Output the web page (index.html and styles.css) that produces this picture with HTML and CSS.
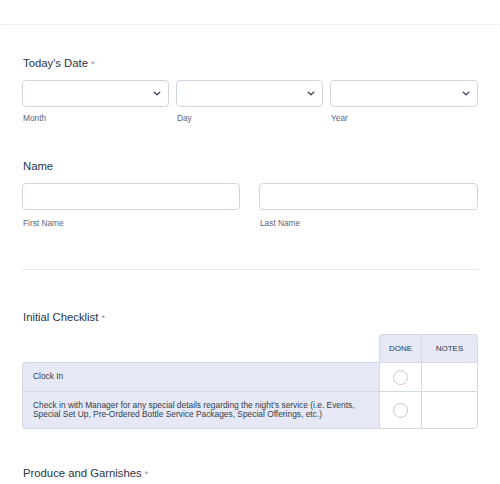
FILE: index.html
```html
<!DOCTYPE html>
<html>
<head>
<meta charset="utf-8">
<link rel="stylesheet" href="styles.css">
</head>
<body>
<div class="header"></div>
<div class="form">
  <div class="field date-field">
    <div class="label">Today's Date <span class="req">*</span></div>
    <div class="row three">
      <div class="col">
        <div class="select"><svg class="chev" width="8" height="5" viewBox="0 0 8 5"><path d="M1.2 1.2l2.8 2.6 2.8-2.6" fill="none" stroke="#3a4254" stroke-width="1.2" stroke-linecap="round" stroke-linejoin="round"/></svg></div>
        <div class="sublabel">Month</div>
      </div>
      <div class="col">
        <div class="select"><svg class="chev" width="8" height="5" viewBox="0 0 8 5"><path d="M1.2 1.2l2.8 2.6 2.8-2.6" fill="none" stroke="#3a4254" stroke-width="1.2" stroke-linecap="round" stroke-linejoin="round"/></svg></div>
        <div class="sublabel">Day</div>
      </div>
      <div class="col">
        <div class="select"><svg class="chev" width="8" height="5" viewBox="0 0 8 5"><path d="M1.2 1.2l2.8 2.6 2.8-2.6" fill="none" stroke="#3a4254" stroke-width="1.2" stroke-linecap="round" stroke-linejoin="round"/></svg></div>
        <div class="sublabel">Year</div>
      </div>
    </div>
  </div>

  <div class="field name-field">
    <div class="label">Name</div>
    <div class="row two">
      <div class="col">
        <div class="input"></div>
        <div class="sublabel">First Name</div>
      </div>
      <div class="col">
        <div class="input"></div>
        <div class="sublabel">Last Name</div>
      </div>
    </div>
  </div>

  <div class="divider"></div>

  <div class="field check-field">
    <div class="label">Initial Checklist <span class="req">*</span></div>
    <div class="matrix">
      <div class="m-empty"></div>
      <div class="m-head">DONE</div>
      <div class="m-head m-last">NOTES</div>

      <div class="m-row m-first">Clock In</div>
      <div class="m-cell"><span class="radio"></span></div>
      <div class="m-cell m-last"></div>

      <div class="m-row m-bottom">Check in with Manager for any special details regarding the night’s service (i.e. Events, Special Set Up, Pre-Ordered Bottle Service Packages, Special Offerings, etc.)</div>
      <div class="m-cell m-bottom"><span class="radio"></span></div>
      <div class="m-cell m-last m-bottom m-br"></div>
    </div>
  </div>

  <div class="field produce-field">
    <div class="label">Produce and Garnishes <span class="req">*</span></div>
  </div>
</div>
</body>
</html>
```

FILE: styles.css
```css
* { box-sizing: border-box; }
html, body { margin: 0; padding: 0; background: #fff; }
body { width: 500px; height: 484px; overflow: hidden; font-family: "Liberation Sans", Arial, sans-serif; color: #2c3345; }

.header { height: 25px; border-bottom: 1px dotted #dfe3ee; }

.form { padding: 0 22px; }

.field { display: flex; flex-direction: column; }
.label { font-size: 11.3px; line-height: 14px; color: #2c3345; padding-left: 1px; }
.req { color: #8a93a8; font-size: 9px; }

.date-field { padding-top: 31px; }
.date-field .label { margin-bottom: 9px; }
.row { display: grid; }
.row.three { grid-template-columns: 147px 147px 148px; column-gap: 7px; }
.row.two { grid-template-columns: 218px 219px; column-gap: 19px; }
.col { display: flex; flex-direction: column; }

.select, .input {
  height: 27px;
  border: 1px solid #cfd5e2;
  border-radius: 4px;
  background: #fff;
}
.select { display: flex; align-items: center; justify-content: flex-end; padding-right: 7px; }
.chev { display: block; }

.sublabel { font-size: 8.3px; line-height: 10px; color: #5b6578; margin-top: 6px; padding-left: 1px; }
.name-field .sublabel { margin-top: 8px; }

.name-field { padding-top: 36px; }
.name-field .label { margin-bottom: 10px; }

.divider { margin-top: 41px; height: 1px; background: #e3e6ef; }

.check-field { padding-top: 40px; }
.check-field .label { margin-bottom: 9px; }

.matrix {
  display: grid;
  grid-template-columns: 357px 42px 57px;
  grid-template-rows: 28px 29px 38px;
}
.m-head {
  background: #e6e9f5;
  border-top: 1px solid #d4d9e6;
  border-left: 1px solid #d4d9e6;
  display: flex; align-items: center; justify-content: center;
  font-size: 8px; color: #2c3345;
}
.m-head:nth-child(2) { border-top-left-radius: 4px; }
.m-head.m-last { border-right: 1px solid #d4d9e6; border-top-right-radius: 4px; }
.m-row {
  background: #e6e9f5;
  border-top: 1px solid #d4d9e6;
  border-left: 1px solid #d4d9e6;
  display: flex; align-items: center;
  padding: 0 20px 0 10px;
  font-size: 8.4px; line-height: 9.5px; color: #343b4a;
}
.m-first { border-top-left-radius: 4px; }
.m-cell {
  background: #fff;
  border-top: 1px solid #d4d9e6;
  border-left: 1px solid #d4d9e6;
  display: flex; align-items: center; justify-content: center;
}
.m-cell.m-last { border-right: 1px solid #d4d9e6; }
.m-bottom { border-bottom: 1px solid #d4d9e6; }
.m-row.m-bottom { border-bottom-left-radius: 4px; }
.m-br { border-bottom-right-radius: 4px; }
.radio { width: 15px; height: 15px; border: 1px solid #c3cad8; border-radius: 50%; background: #fff; }

.produce-field { padding-top: 37px; }
```
